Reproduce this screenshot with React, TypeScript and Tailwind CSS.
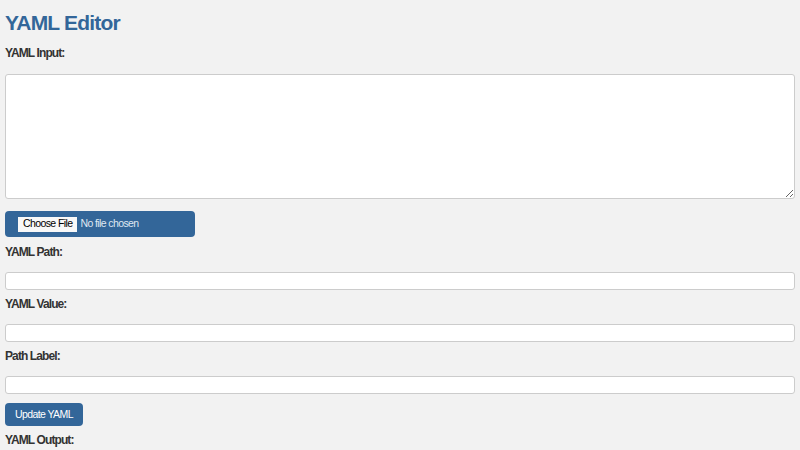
import React from "react"

function FieldLabel({ children, className = "" }: { children: React.ReactNode; className?: string }) {
  return (
    <label className={`block text-[12px] leading-[14px] font-bold tracking-[-0.9px] text-[#333] ${className}`}>
      {children}
    </label>
  )
}

function TextField() {
  return (
    <input
      type="text"
      className="mt-[13px] block h-[18px] w-full rounded-[3px] border border-[#ccc] bg-white px-1 text-[11px] outline-none"
    />
  )
}

export default function App() {
  return (
    <div
      className="min-h-[450px] w-full bg-[#f2f2f2] px-[5px] pb-4 text-[#333]"
      style={{ fontFamily: '"Liberation Sans", Arial, sans-serif' }}
    >
      <h1 className="pt-[11px] text-[21px] leading-[24px] font-bold tracking-[-0.8px] text-[#336699]">
        YAML Editor
      </h1>

      <FieldLabel className="mt-[11px]">YAML Input:</FieldLabel>
      <textarea className="mt-[14px] block h-[125px] w-full rounded-[3px] border border-[#ccc] bg-white p-1 text-[11px] outline-none" />

      <div className="mt-[12px] flex h-[26px] w-[190px] items-center rounded-[4px] bg-[#336699] pl-[13px] text-[10.5px] tracking-[-0.6px]">
        <span className="flex h-[15px] items-center bg-[#f8f8f8] px-[5px] text-black">Choose File</span>
        <span className="ml-[3px] text-[#dfe8f2]">No file chosen</span>
      </div>

      <FieldLabel className="mt-[8px]">YAML Path:</FieldLabel>
      <TextField />

      <FieldLabel className="mt-[7px]">YAML Value:</FieldLabel>
      <TextField />

      <FieldLabel className="mt-[7px]">Path Label:</FieldLabel>
      <TextField />

      <button
        type="button"
        className="mt-[9px] flex h-[23px] w-[78px] items-center justify-center rounded-[4px] bg-[#336699] text-[10.5px] tracking-[-0.6px] text-white"
      >
        Update YAML
      </button>

      <FieldLabel className="mt-[7px]">YAML Output:</FieldLabel>
    </div>
  )
}
